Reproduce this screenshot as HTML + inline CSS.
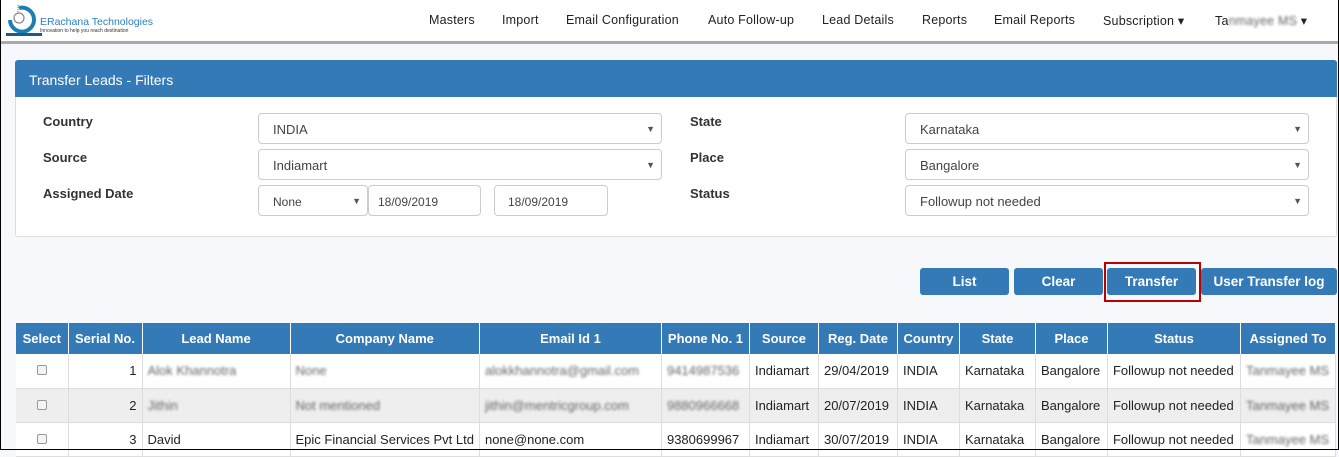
<!DOCTYPE html>
<html><head><meta charset="utf-8"><style>
*{box-sizing:border-box;margin:0;padding:0}
body{width:1339px;height:450px;overflow:hidden;background:#f7f8fc;font-family:"Liberation Sans",Arial,sans-serif;color:#333;position:relative;font-size:13px}
.a{position:absolute}
.frame{position:absolute;inset:0;border:1px solid #000;border-top:none;pointer-events:none;z-index:10}
.nav{left:0;top:0;width:1339px;height:44px;background:#fff;border-bottom:3px solid #aaa}
.nav span{position:absolute;top:13px;font-size:12.5px;color:#222;letter-spacing:.2px}
.panel{left:15px;top:60px;width:1322px;height:177px;background:#fff;border:1px solid #ddd;border-radius:3px}
.ph{left:15px;top:60px;width:1322px;height:37px;background:#337ab7;color:#fff;font-size:14px;padding:12px 0 0 14px;border-radius:3px 3px 0 0}
.lbl{font-weight:bold;font-size:13px;color:#333}
.sel{background:#fff;border:1px solid #ccc;border-radius:4px;font-size:13px;padding:8px 0 0 14px;color:#444}
.sel i{position:absolute;right:6px;top:10px;font-style:normal;font-size:9px;color:#555}
.btn{background:#337ab7;color:#fff;font-weight:bold;font-size:13.5px;text-align:center;border-radius:3px;padding-top:6px;height:27px;top:268px}
table{position:absolute;left:16px;top:323px;border-collapse:collapse;font-size:13px}
th{background:#337ab7;color:#fff;height:31px;border-right:1px solid #fff;font-size:13px}
td{height:34px;border-right:1px solid #ddd;border-bottom:1px solid #ddd;padding:0 5px;white-space:nowrap;color:#222;background:#fff}
tr.g td{background:#eee}
.b{filter:blur(1.2px);color:#666}
.cb{display:inline-block;width:10px;height:10px;border:1px solid #999;border-radius:2px;background:#f4f4f4}
</style></head><body>
<div class="a nav">
<svg class="a" style="left:4px;top:3px" width="40" height="34" viewBox="0 0 40 34"><path d="M6 17a12 12 0 1 0 9-12" fill="none" stroke="#1a7fb5" stroke-width="4"/><circle cx="15" cy="15" r="5" fill="none" stroke="#888" stroke-width="1.2"/><path d="M14 2v7" stroke="#1a7fb5" stroke-width="1" stroke-dasharray="1 1"/><rect x="2" y="30" width="36" height="3" fill="#1a5c8a"/></svg>
<div class="a" style="left:40px;top:16px;font-size:10.5px;color:#2a7fbf">ERachana Technologies</div>
<div class="a" style="left:40px;top:28px;font-size:5px;color:#333">Innovation to help you reach destination</div>
<span style="left:429px">Masters</span><span style="left:502px">Import</span><span style="left:566px">Email Configuration</span><span style="left:708px">Auto Follow-up</span><span style="left:822px">Lead Details</span><span style="left:922px">Reports</span><span style="left:994px">Email Reports</span><span style="left:1103px">Subscription ▾</span><span style="left:1215px">Ta<b class="b" style="font-weight:normal">nmayee MS</b> ▾</span>
</div>
<div class="a panel"></div>
<div class="a ph">Transfer Leads - Filters</div>
<div class="a lbl" style="left:43px;top:114px">Country</div>
<div class="a lbl" style="left:43px;top:150px">Source</div>
<div class="a lbl" style="left:43px;top:186px">Assigned Date</div>
<div class="a lbl" style="left:690px;top:114px">State</div>
<div class="a lbl" style="left:690px;top:150px">Place</div>
<div class="a lbl" style="left:690px;top:186px">Status</div>
<div class="a sel" style="left:258px;top:113px;width:404px;height:31px">INDIA<i>▼</i></div>
<div class="a sel" style="left:258px;top:149px;width:404px;height:31px">Indiamart<i>▼</i></div>
<div class="a sel" style="left:258px;top:185px;width:110px;height:31px;font-size:12px;padding-top:9px">None<i>▼</i></div>
<div class="a sel" style="left:368px;top:185px;width:113px;height:31px;font-size:12px;padding:9px 0 0 9px">18/09/2019</div>
<div class="a sel" style="left:494px;top:185px;width:114px;height:31px;font-size:12px;padding:9px 0 0 13px">18/09/2019</div>
<div class="a sel" style="left:905px;top:113px;width:404px;height:31px">Karnataka<i>▼</i></div>
<div class="a sel" style="left:905px;top:149px;width:404px;height:31px">Bangalore<i>▼</i></div>
<div class="a sel" style="left:905px;top:185px;width:404px;height:31px">Followup not needed<i>▼</i></div>
<div class="a btn" style="left:920px;width:89px">List</div>
<div class="a btn" style="left:1014px;width:89px">Clear</div>
<div class="a btn" style="left:1107px;width:89px">Transfer</div>
<div class="a btn" style="left:1201px;width:136px">User Transfer log</div>
<div class="a" style="left:1104px;top:262px;width:97px;height:40px;border:2px solid #b00"></div>
<table>
<tr><th style="width:52px">Select</th><th style="width:74px">Serial No.</th><th style="width:148px">Lead Name</th><th style="width:188px">Company Name</th><th style="width:182px">Email Id 1</th><th style="width:88px">Phone No. 1</th><th style="width:69px">Source</th><th style="width:79px">Reg. Date</th><th style="width:62px">Country</th><th style="width:76px">State</th><th style="width:72px">Place</th><th style="width:133px">Status</th><th style="width:95px">Assigned To</th></tr>
<tr><td align="center"><span class="cb"></span></td><td align="right">1</td><td><span class="b">Alok Khannotra</span></td><td><span class="b">None</span></td><td><span class="b">alokkhannotra@gmail.com</span></td><td><span class="b">9414987536</span></td><td>Indiamart</td><td>29/04/2019</td><td>INDIA</td><td>Karnataka</td><td>Bangalore</td><td>Followup not needed</td><td><span class="b">Tanmayee MS</span></td></tr>
<tr class="g"><td align="center"><span class="cb"></span></td><td align="right">2</td><td><span class="b">Jithin</span></td><td><span class="b">Not mentioned</span></td><td><span class="b">jithin@mentricgroup.com</span></td><td><span class="b">9880966668</span></td><td>Indiamart</td><td>20/07/2019</td><td>INDIA</td><td>Karnataka</td><td>Bangalore</td><td>Followup not needed</td><td><span class="b">Tanmayee MS</span></td></tr>
<tr><td align="center"><span class="cb"></span></td><td align="right">3</td><td>David</td><td>Epic Financial Services Pvt Ltd</td><td>none@none.com</td><td>9380699967</td><td>Indiamart</td><td>30/07/2019</td><td>INDIA</td><td>Karnataka</td><td>Bangalore</td><td>Followup not needed</td><td><span class="b">Tanmayee MS</span></td></tr>
</table>
<div class="frame"></div>
</body></html>
